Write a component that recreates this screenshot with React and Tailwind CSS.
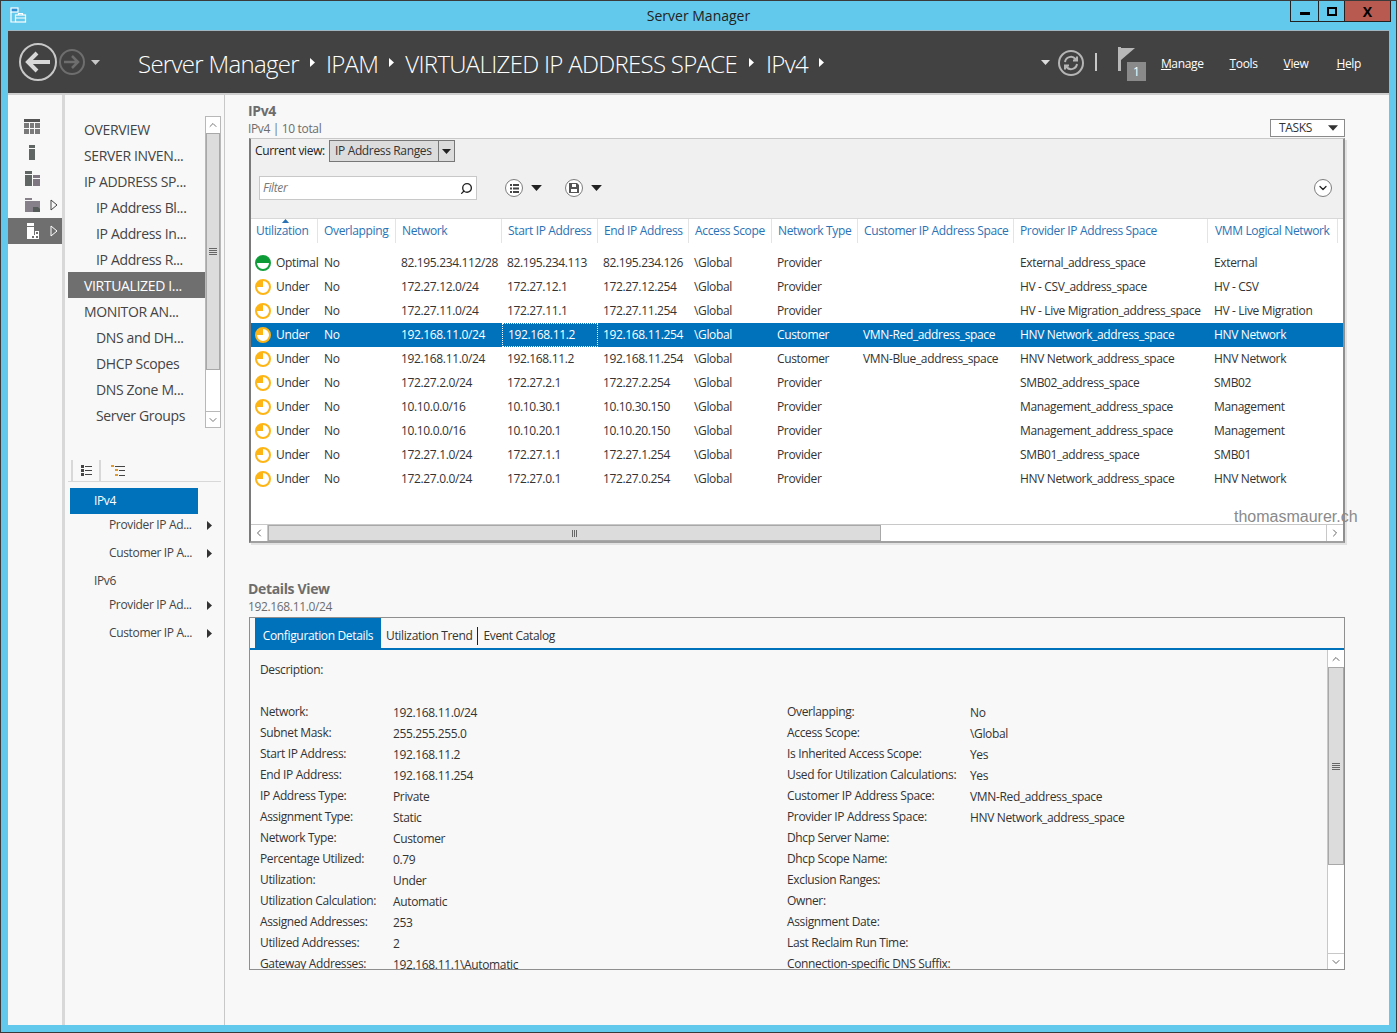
import React from 'react';
import { ChevronUp, ChevronDown, ChevronLeft, ChevronRight, Search } from 'lucide-react';

const ranges = [
  ['Optimal', 'No', '82.195.234.112/28', '82.195.234.113', '82.195.234.126', '\\Global', 'Provider', '', 'External_address_space', 'External'],
  ['Under', 'No', '172.27.12.0/24', '172.27.12.1', '172.27.12.254', '\\Global', 'Provider', '', 'HV - CSV_address_space', 'HV - CSV'],
  ['Under', 'No', '172.27.11.0/24', '172.27.11.1', '172.27.11.254', '\\Global', 'Provider', '', 'HV - Live Migration_address_space', 'HV - Live Migration'],
  ['Under', 'No', '192.168.11.0/24', '192.168.11.2', '192.168.11.254', '\\Global', 'Customer', 'VMN-Red_address_space', 'HNV Network_address_space', 'HNV Network'],
  ['Under', 'No', '192.168.11.0/24', '192.168.11.2', '192.168.11.254', '\\Global', 'Customer', 'VMN-Blue_address_space', 'HNV Network_address_space', 'HNV Network'],
  ['Under', 'No', '172.27.2.0/24', '172.27.2.1', '172.27.2.254', '\\Global', 'Provider', '', 'SMB02_address_space', 'SMB02'],
  ['Under', 'No', '10.10.0.0/16', '10.10.30.1', '10.10.30.150', '\\Global', 'Provider', '', 'Management_address_space', 'Management'],
  ['Under', 'No', '10.10.0.0/16', '10.10.20.1', '10.10.20.150', '\\Global', 'Provider', '', 'Management_address_space', 'Management'],
  ['Under', 'No', '172.27.1.0/24', '172.27.1.1', '172.27.1.254', '\\Global', 'Provider', '', 'SMB01_address_space', 'SMB01'],
  ['Under', 'No', '172.27.0.0/24', '172.27.0.1', '172.27.0.254', '\\Global', 'Provider', '', 'HNV Network_address_space', 'HNV Network'],
];

const columns = ['Utilization', 'Overlapping', 'Network', 'Start IP Address', 'End IP Address', 'Access Scope', 'Network Type', 'Customer IP Address Space', 'Provider IP Address Space', 'VMM Logical Network'];
const widths = [67, 78, 106, 96, 91, 83, 86, 156, 194, 130];

const leftDetails = [
  ['Network:', '192.168.11.0/24'], ['Subnet Mask:', '255.255.255.0'], ['Start IP Address:', '192.168.11.2'], ['End IP Address:', '192.168.11.254'],
  ['IP Address Type:', 'Private'], ['Assignment Type:', 'Static'], ['Network Type:', 'Customer'], ['Percentage Utilized:', '0.79'],
  ['Utilization:', 'Under'], ['Utilization Calculation:', 'Automatic'], ['Assigned Addresses:', '253'], ['Utilized Addresses:', '2'],
  ['Gateway Addresses:', '192.168.11.1\\Automatic'],
];
const rightDetails = [
  ['Overlapping:', 'No'], ['Access Scope:', '\\Global'], ['Is Inherited Access Scope:', 'Yes'], ['Used for Utilization Calculations:', 'Yes'],
  ['Customer IP Address Space:', 'VMN-Red_address_space'], ['Provider IP Address Space:', 'HNV Network_address_space'], ['Dhcp Server Name:', ''], ['Dhcp Scope Name:', ''],
  ['Exclusion Ranges:', ''], ['Owner:', ''], ['Assignment Date:', ''], ['Last Reclaim Run Time:', ''], ['Connection-specific DNS Suffix:', ''],
];

const navItems = [
  ['OVERVIEW', 0], ['SERVER INVEN...', 0], ['IP ADDRESS SP...', 0], ['IP Address Bl...', 1], ['IP Address In...', 1], ['IP Address R...', 1],
  ['VIRTUALIZED I...', 0, true], ['MONITOR AN...', 0], ['DNS and DH...', 1], ['DHCP Scopes', 1], ['DNS Zone M...', 1], ['Server Groups', 1],
];

function UtilIcon({ kind }) {
  if (kind === 'Optimal') {
    return (
      <svg width="16" height="16" viewBox="0 0 16 16" className="shrink-0">
        <circle cx="8" cy="8" r="7" fill="#fff" stroke="#12a03c" strokeWidth="2" />
        <path d="M1 8a7 7 0 0 1 14 0z" fill="#0c9a36" />
      </svg>
    );
  }
  return (
    <svg width="16" height="16" viewBox="0 0 16 16" className="shrink-0">
      <circle cx="8" cy="8" r="7" fill="#fff" stroke="#fdb515" strokeWidth="2" />
      <path d="M8 8V1a7 7 0 0 0-7 7z" fill="#fdb515" />
    </svg>
  );
}

function StripIcon({ children }) {
  return <svg width="16" height="16" viewBox="0 0 16 16" fill="#5f6664" className="shrink-0">{children}</svg>;
}

function Triangle({ dir = 'down', className = '' }) {
  const d = dir === 'down' ? 'M0 0h9L4.5 5z' : 'M0 0l5 4.5L0 9z';
  return <svg width={dir === 'down' ? 9 : 5} height={dir === 'down' ? 5 : 9} viewBox={dir === 'down' ? '0 0 9 5' : '0 0 5 9'} fill="currentColor" className={className}><path d={d} /></svg>;
}

function Gripper({ vertical }) {
  if (vertical) {
    return <div className="flex h-[7px] w-[5px] justify-between"><i className="block w-px bg-[#666]" /><i className="block w-px bg-[#666]" /><i className="block w-px bg-[#666]" /></div>;
  }
  return <div className="flex h-[7px] w-[8px] flex-col justify-between"><i className="block h-px bg-[#666]" /><i className="block h-px bg-[#666]" /><i className="block h-px bg-[#666]" /><i className="block h-px bg-[#666]" /></div>;
}

function RoundButton({ children }) {
  return <span className="flex h-[18px] w-[18px] items-center justify-center rounded-full border border-[#7d7d7d] bg-white">{children}</span>;
}

export default function App() {
  return (
    <div className="relative flex h-[1033px] w-[1397px] flex-col overflow-hidden border border-[#3a3a3a] bg-[#63c9ec] text-[12px] tracking-[-0.35px] text-[#333] [font-family:'Open_Sans',sans-serif]">
      {/* Title bar */}
      <div className="relative flex h-[29px] shrink-0 items-center justify-center text-[14px] tracking-normal text-[#222]">
        <svg width="18" height="18" viewBox="0 0 18 18" className="absolute left-[9px] top-[6px]" fill="none" stroke="#fff" strokeWidth="1.2">
          <rect x="1" y="1" width="7" height="4" fill="#2f8fd4" />
          <path d="M1 5v10h4" />
          <rect x="5.500" y="8" width="10" height="7" />
          <path d="M8.500 8V6.500h4V8M5.500 11h10" />
        </svg>
        Server Manager
        <div className="absolute right-[5px] top-0 flex h-[21px] border border-t-0 border-[#222] text-black">
          <div className="flex w-[28px] items-center justify-center border-r border-[#222]"><i className="mt-[5px] block h-[3px] w-[10px] bg-black" /></div>
          <div className="flex w-[26px] items-center justify-center border-r border-[#222]"><i className="block h-[9px] w-[10px] border-2 border-black" /></div>
          <div className="flex w-[45px] items-center justify-center bg-[#b85a50] text-[14px] font-bold">X</div>
        </div>
      </div>

      <div className="flex min-h-0 flex-1 flex-col pb-[7px] pl-[7px] pr-[7px]">
        {/* Breadcrumb header */}
        <div className="flex h-[63px] shrink-0 items-center border-t border-[#9fb6c0] bg-[#424242] text-white">
          <div className="ml-[11px] flex h-[38px] w-[38px] items-center justify-center rounded-full border-2 border-[#c8c8c8] text-[#d8d8d8]">
            <svg width="26" height="22" viewBox="0 0 26 22" fill="none" stroke="currentColor" strokeWidth="4"><path d="M25 11H4M12 2l-9 9 9 9" /></svg>
          </div>
          <div className="ml-[2px] flex h-[26px] w-[26px] items-center justify-center rounded-full border-2 border-[#6e6e6e] text-[#6e6e6e]">
            <svg width="16" height="14" viewBox="0 0 16 14" fill="none" stroke="currentColor" strokeWidth="2.500"><path d="M0 7h14M8 1l6 6-6 6" /></svg>
          </div>
          <Triangle className="ml-[6px] text-[#c8c8c8]" />
          <div className="ml-[38px] flex items-center pt-[3px] text-[24px] font-light tracking-[-0.7px]">
            <span>Server Manager</span>
            <Triangle dir="right" className="mx-[11px] mb-[3px]" />
            <span>IPAM</span>
            <Triangle dir="right" className="mx-[11px] mb-[3px]" />
            <span>VIRTUALIZED IP ADDRESS SPACE</span>
            <Triangle dir="right" className="ml-[12px] mr-[12px] mb-[3px]" />
            <span>IPv4</span>
            <Triangle dir="right" className="mx-[11px] mb-[3px]" />
          </div>
          <div className="ml-auto flex items-center pr-[28px]">
            <Triangle className="mr-[8px] text-[#ddd]" />
            <span className="mt-px flex h-[26px] w-[26px] items-center justify-center rounded-full border-2 border-[#b5b5b5] text-[#b5b5b5]">
              <svg width="16" height="16" viewBox="0 0 16 16" fill="none" stroke="currentColor" strokeWidth="2"><path d="M2 7a6 6 0 0 1 10.500-3L14 5.500M14 1.500v4h-4M14 9a6 6 0 0 1-10.500 3L2 10.500M2 14.500v-4h4" /></svg>
            </span>
            <i className="ml-[11px] block h-[18px] w-[2px] bg-[#c8c8c8]" />
            <div className="relative ml-[21px] h-[30px] w-[28px]">
              <svg width="18" height="24" viewBox="0 0 18 24" className="absolute left-0 top-0" fill="#b8b8b8"><path d="M0 0h3v24H0zM3 1h14L3 13z" /></svg>
              <span className="absolute left-[9px] top-[15px] flex h-[19px] w-[19px] items-center justify-center bg-[#8a8a8a] text-[12px] text-white">1</span>
            </div>
            <div className="ml-[15px] flex gap-[26px] pt-[3px] text-white">
              <span><u>M</u>anage</span>
              <span><u>T</u>ools</span>
              <span><u>V</u>iew</span>
              <span className="ml-[2px]"><u>H</u>elp</span>
            </div>
          </div>
        </div>

        <div className="flex min-h-0 flex-1 border-t-2 border-[#cfcfcf] bg-[#f8f8f8]">
          {/* Icon strip */}
          <div className="w-[54px] shrink-0 bg-[#f8f8f8] pt-[19px]">
            {[
              <><path d="M0 0h16v3H0z" fill="#555" /><path d="M0 4h5v5H0zM6 4h4v5H6zM11 4h5v5h-5zM0 10h5v5H0zM6 10h4v5H6zM11 10h5v5h-5z" fill="#7a7a7a" /></>,
              <><path d="M5 0h6v3H5z" /><path d="M5 4h6v11H5z" /></>,
              <><path d="M1 0h7v3H1zM1 4h7v11H1z" /><path d="M9 4h7v3H9zM9 8h7v7H9z" fill="#7f7882" /></>,
              <><path d="M1 1h7v2H1zM1 4h15v11H1z" fill="#85808a" /><path d="M9 10h5l2 2v3H9z" fill="#565c5a" /></>,
              <><path d="M3 0h7v3H3zM3 4h7v12H3z" fill="#fff" /><path d="M11 8h4v4h-4zM7 12h4v4H7zM11 12h4v4h-4z" fill="#fff" /><path d="M12 9h2v2h-2zM8 13h2v2H8zM12 13h2v2h-2z" fill="#6f6f6f" /></>,
            ].map((icon, i) => (
              <div key={i} className={`flex h-[26px] items-center pl-[16px] ${i === 4 ? 'bg-[#6f6f6f]' : ''}`}>
                <StripIcon>{icon}</StripIcon>
                {i > 2 && <svg width="8" height="12" viewBox="0 0 8 12" className="ml-[10px]" fill="none" stroke={i === 4 ? '#fff' : '#444'}><path d="M1 1l6 5-6 5z" /></svg>}
              </div>
            ))}
          </div>
          <div className="w-[3px] shrink-0 bg-[#d8d8d8]" />

          {/* Navigation column */}
          <div className="flex w-[160px] shrink-0 flex-col border-r border-[#c8c8c8] pl-[3px] pr-[3px]">
            <div className="flex h-[312px] pt-[21px]">
              <div className="w-[137px] shrink-0 text-[14px] text-[#444]">
                {navItems.map(([label, indent, active]) => (
                  <div key={label} className={`flex h-[26px] items-center whitespace-nowrap ${indent ? 'pl-[28px]' : 'pl-[16px]'} ${active ? 'bg-[#6f6f6f] text-white' : ''}`}>{label}</div>
                ))}
              </div>
              <div className="flex h-[312px] w-[16px] flex-col border border-[#b8b8b8] bg-white">
                <span className="flex h-[16px] items-center justify-center text-[#777]"><ChevronUp size={12} /></span>
                <div className="flex h-[237px] items-center justify-center border border-[#a8a8a8] bg-[#dcdcdc]"><Gripper /></div>
                <div className="flex-1" />
                <span className="flex h-[16px] items-center justify-center border-t border-[#b8b8b8] text-[#777]"><ChevronDown size={12} /></span>
              </div>
            </div>

            <div className="mt-[53px] flex h-[22px] border-b border-[#d8d8d8] pl-[3px]">
              <div className="flex h-[21px] w-[30px] items-center justify-center border-x-2 border-[#d8d8d8]">
                <svg width="11" height="11" viewBox="0 0 11 11" fill="#444"><path d="M0 0h3v3H0zM0 4h3v3H0zM0 8h3v3H0zM4 1h7v1H4zM4 5h7v1H4zM4 9h7v1H4z" /></svg>
              </div>
              <div className="ml-[10px] flex items-center">
                <svg width="15" height="12" viewBox="0 0 15 12"><path d="M0 0h3v2H0zM4 4h3v2H4zM4 9h3v2H4z" fill="#e39a2d" /><path d="M4 1h10v1H4zM8 5h6v1H8zM8 10h6v1H8z" fill="#444" /></svg>
              </div>
            </div>

            <div className="ml-[2px] mt-[6px] w-[128px] bg-[#0072bc] py-[4px] pl-[24px] text-white">IPv4</div>
            <div className="-mt-px ml-[2px] text-[#444]">
              {[['Provider IP Ad...', 'h-[24px]'], ['Customer IP A...', 'h-[32px]']].map(([label, h]) => (
                <div key={label} className={`flex w-[142px] items-center justify-between pl-[39px] ${h}`}>
                  <span>{label}</span><Triangle dir="right" className="text-[#333]" />
                </div>
              ))}
              <div className="flex h-[24px] items-center pl-[24px]">IPv6</div>
              {[['Provider IP Ad...', 'h-[24px]'], ['Customer IP A...', 'h-[32px]']].map(([label, h]) => (
                <div key={label} className={`flex w-[142px] items-center justify-between pl-[39px] ${h}`}>
                  <span>{label}</span><Triangle dir="right" className="text-[#333]" />
                </div>
              ))}
            </div>
          </div>

          {/* Main content */}
          <div className="relative min-w-0 flex-1 pl-[24px] pr-[44px] pt-[6px]">
            <div className="-ml-px mb-px text-[14px] font-bold leading-[19px] text-[#6d6d6d]">IPv4</div>
            <div className="flex items-start justify-between">
              <span className="-ml-px leading-[16px] text-[#6d6d6d]">IPv4 | 10 total</span>
              <span className="-mt-[2px] flex h-[18px] w-[75px] items-center justify-between border border-[#8a8a8a] bg-white pl-[8px] pr-[6px] text-[#333]">TASKS<Triangle className="h-[6px] w-[10px] text-[#333]" /></span>
            </div>

            <div className="mt-px h-[405px] border-x-2 border-b-2 border-t border-l-[#7a7a7a] border-r-[#8f8f8f] border-b-[#a0a0a0] border-t-[#c8c8c8] bg-white shadow-[2px_2px_0_#e2e2e2]">
              <div className="h-[79px] bg-[#f0f0f0] pl-[4px] pr-[11px] pt-px">
                <div className="flex items-center">
                  <span className="w-[74px] text-[#222]">Current view:</span>
                  <div className="flex h-[22px] w-[126px] items-center border border-[#777] bg-[#dcdcdc]">
                    <span className="flex-1 pl-[5px]">IP Address Ranges</span>
                    <span className="flex h-full w-[16px] items-center justify-center border-l border-[#777]"><Triangle className="text-[#222]" /></span>
                  </div>
                </div>
                <div className="mt-[14px] flex h-[24px] items-center">
                  <div className="ml-[4px] flex h-[24px] w-[218px] items-center justify-between border border-[#c8c8c8] bg-white pl-[3px] pr-[3px] italic text-[#777]">
                    Filter<Search size={13} strokeWidth={2.5} className="-scale-x-100 text-[#222]" />
                  </div>
                  <div className="ml-[28px]"><RoundButton><svg width="9" height="9" viewBox="0 0 9 9" fill="#444"><path d="M0 0h2v2H0zM3 0h6v2H3zM0 3.500h2v2H0zM3 3.500h6v2H3zM0 7h2v2H0zM3 7h6v2H3z" /></svg></RoundButton></div>
                  <Triangle className="ml-[8px] h-[6px] w-[11px] text-[#222]" />
                  <div className="ml-[23px]"><RoundButton><svg width="10" height="10" viewBox="0 0 10 10" fill="#555"><path d="M0 0h8l2 2v8H0zM3 1v3h4V1zM2 6v3h6V6z" fillRule="evenodd" /></svg></RoundButton></div>
                  <Triangle className="ml-[8px] h-[6px] w-[11px] text-[#222]" />
                  <span className="ml-auto"><RoundButton><ChevronDown size={12} strokeWidth={2.5} className="text-[#222]" /></RoundButton></span>
                </div>
              </div>

              <div className="relative flex h-[25px] border-t border-[#d8d8d8] text-[#2a72b5]">
                <Triangle className="absolute left-[30px] top-0 h-[4px] rotate-180 text-[#2a72b5]" />
                {columns.map((c, i) => (
                  <div key={c} style={{ width: widths[i] }} className={`flex h-[24px] shrink-0 items-center whitespace-nowrap border-r border-[#e4e4e4] ${i === 0 ? 'pl-[5px]' : i === 9 ? 'pl-[7px]' : 'pl-[6px]'}`}>{c}</div>
                ))}
              </div>

              <div className="mt-[8px] h-[273px] overflow-hidden">
                {ranges.map((row, r) => (
                  <div key={r} className={`flex h-[24px] items-center ${r === 3 ? 'bg-[#0072bc] text-white' : 'text-[#333]'}`}>
                    {row.map((v, i) => (
                      <div key={i} style={{ width: widths[i] }} className={`flex h-full shrink-0 items-center whitespace-nowrap ${i === 0 ? 'gap-[5px] pl-[4px]' : i === 1 || i >= 8 ? 'pl-[6px]' : 'pl-[5px]'} ${r === 3 && i === 3 ? 'border border-dotted border-white pl-[4px]' : ''}`}>
                        {i === 0 && <UtilIcon kind={v} />}
                        {v}
                      </div>
                    ))}
                  </div>
                ))}
              </div>

              <div className="flex h-[17px] items-stretch border-t border-[#c8c8c8] bg-white text-[#666]">
                <span className="flex w-[17px] items-center justify-center border-r border-[#c8c8c8]"><ChevronLeft size={12} /></span>
                <div className="flex w-[613px] items-center justify-center border border-[#a8a8a8] bg-[#dcdcdc]"><Gripper vertical /></div>
                <div className="flex-1" />
                <span className="flex w-[17px] items-center justify-center border-l border-[#c8c8c8]"><ChevronRight size={12} /></span>
              </div>
            </div>

            <div className="-ml-px mb-px mt-[36px] text-[14px] font-bold leading-[19px] text-[#6d6d6d]">Details View</div>
            <div className="-ml-px leading-[16px] text-[#6d6d6d]">192.168.11.0/24</div>

            <div className="mt-[2px] flex h-[353px] flex-col border border-[#8f8f8f]">
              <div className="flex h-[32px] shrink-0 items-end border-b-2 border-[#0072bc] pl-[5px]">
                <span className="flex h-[30px] w-[126px] items-center justify-center bg-[#0072bc] pt-[5px] text-white">Configuration Details</span>
                <span className="mb-[3px] ml-[5px] flex h-[18px] items-center border-r border-[#222] pr-[5px]">Utilization Trend</span>
                <span className="mb-[3px] ml-[5px] flex h-[18px] items-center">Event Catalog</span>
              </div>
              <div className="flex min-h-0 flex-1">
                <div className="min-w-0 flex-1 overflow-hidden pl-[10px] pt-[11px] text-[#333]">
                  <div className="h-[40px] leading-[17px]">Description:</div>
                  <div className="flex">
                    <div className="w-[527px] shrink-0">
                      {leftDetails.map(([k, v]) => (
                        <div key={k} className="flex h-[21px] items-center whitespace-nowrap"><span className="w-[133px] shrink-0">{k}</span><span className="pt-[2px]">{v}</span></div>
                      ))}
                    </div>
                    <div>
                      {rightDetails.map(([k, v]) => (
                        <div key={k} className="flex h-[21px] items-center whitespace-nowrap"><span className="w-[183px] shrink-0">{k}</span><span className="pt-[2px]">{v}</span></div>
                      ))}
                    </div>
                  </div>
                </div>
                <div className="flex w-[17px] shrink-0 flex-col border-l border-[#c8c8c8] bg-white">
                  <span className="flex h-[17px] items-center justify-center text-[#666]"><ChevronUp size={12} /></span>
                  <div className="flex h-[198px] items-center justify-center border border-[#a8a8a8] bg-[#dcdcdc]"><Gripper /></div>
                  <div className="flex-1" />
                  <span className="flex h-[16px] items-center justify-center border-t border-[#c8c8c8] text-[#666]"><ChevronDown size={12} /></span>
                </div>
              </div>
            </div>

            <span className="absolute left-[1009px] top-[413px] text-[16px] leading-[18px] tracking-normal text-[#8a8a8a] [font-family:'Liberation_Sans',sans-serif]">thomasmaurer.ch</span>
          </div>
        </div>
      </div>
    </div>
  );
}
